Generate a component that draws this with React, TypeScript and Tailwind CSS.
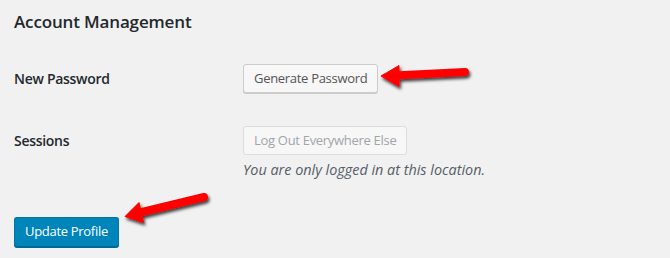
import React from "react";

function Arrows() {
  return (
    <svg
      className="absolute left-0 top-0 pointer-events-none"
      width={670}
      height={258}
      viewBox="0 0 670 258"
    >
      <defs>
        <filter id="sh" x="-20%" y="-50%" width="140%" height="200%">
          <feDropShadow dx="1.5" dy="2.5" stdDeviation="1.4" floodColor="#000" floodOpacity="0.75" />
        </filter>
      </defs>
      <g filter="url(#sh)" fill="#ff0000" stroke="#ff0000">
        <line x1="394" y1="75.5" x2="465" y2="72" strokeWidth="8" strokeLinecap="round" />
        <polygon points="381,76 399,65.5 399,86.5" strokeWidth="1" strokeLinejoin="round" />
      </g>
      <g filter="url(#sh)" fill="#ff0000" stroke="#ff0000">
        <line x1="138" y1="213" x2="204" y2="197" strokeWidth="8" strokeLinecap="round" />
        <polygon points="125,216.5 143.5,222.5 139,202.5" strokeWidth="1" strokeLinejoin="round" />
      </g>
    </svg>
  );
}

export default function App() {
  return (
    <div
      className="relative w-[670px] h-[258px] bg-[#f1f1f1] overflow-hidden text-[#23282d]"
      style={{ fontFamily: '"Open Sans", "Noto Sans", sans-serif' }}
    >
      <div className="flex flex-col px-[14px]">
        <h2 className="mt-[9px] h-[26px] leading-[26px] text-[17px] font-semibold tracking-[-0.15px]">Account Management</h2>
        <div className="mt-[29px] flex items-center">
          <div className="w-[229px] text-[14px] font-semibold tracking-[-0.3px]">New Password</div>
          <button className="h-[29px] px-[10px] text-[13px] tracking-[-0.3px] text-[#555] bg-[#f7f7f7] border border-[#cccccc] rounded-[3px] shadow-[0_1px_0_#cccccc]">
            Generate Password
          </button>
        </div>
        <div className="mt-[33px] flex items-start">
          <div className="w-[229px] h-[29px] flex items-center text-[14px] font-semibold tracking-[-0.3px]">Sessions</div>
          <div className="flex flex-col">
            <button className="h-[29px] self-start px-[10px] text-[13px] tracking-[-0.3px] text-[#a0a5aa] bg-[#f7f7f7] border border-[#dddddd] rounded-[3px]">
              Log Out Everywhere Else
            </button>
            <p className="mt-[5px] text-[14.4px] italic text-[#555d66] leading-[20px]">
              You are only logged in at this location.
            </p>
          </div>
        </div>
        <div className="mt-[37px]">
          <button className="h-[30px] px-[10px] text-[13px] tracking-[-0.3px] text-white bg-[#0085ba] border border-[#0073aa] border-b-[#006799] rounded-[3px] shadow-[0_1px_0_#006799]">
            Update Profile
          </button>
        </div>
      </div>
      <Arrows />
    </div>
  );
}
